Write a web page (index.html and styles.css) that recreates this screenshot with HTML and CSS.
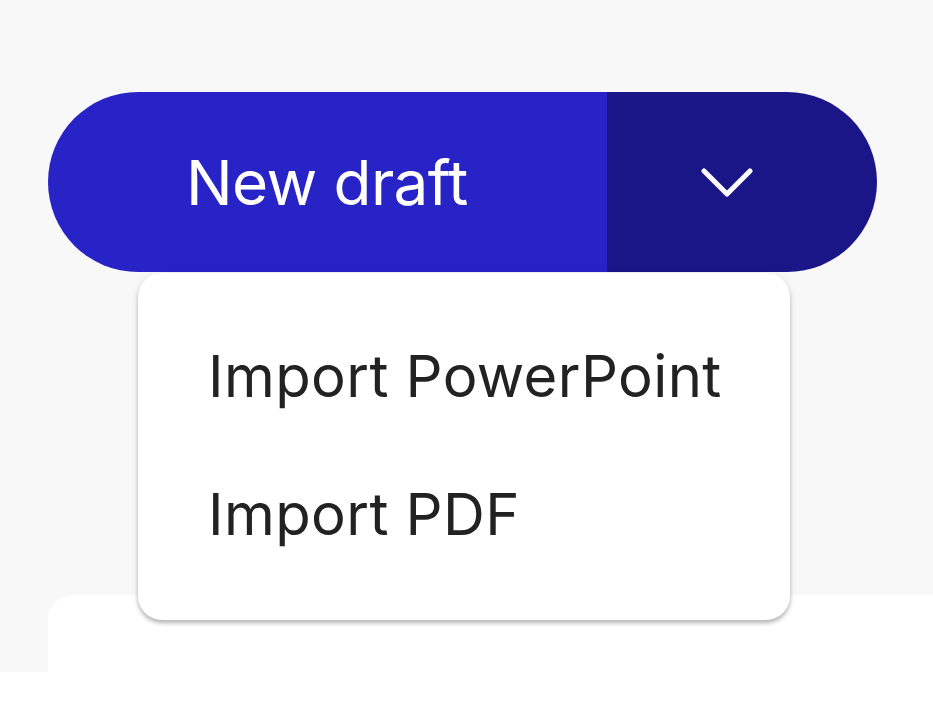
FILE: index.html
```html
<!DOCTYPE html>
<html lang="en">
<head>
    <meta charset="UTF-8">
    <title>New draft</title>
    <link rel="stylesheet" href="styles.css">
</head>
<body>
    <div class="top">
        <div class="split-button">
            <button class="split-main">New draft</button>
            <button class="split-toggle" aria-label="More options">
                <svg width="52" height="30" viewBox="0 0 52 30">
                    <polyline points="3,3 26,26 49,3" fill="none" stroke="#fff" stroke-width="5" stroke-linecap="round" stroke-linejoin="round"/>
                </svg>
            </button>
        </div>

        <div class="menu">
            <div class="menu-item">Import PowerPoint</div>
            <div class="menu-item">Import PDF</div>
        </div>
    </div>

    <div class="sheet-row">
        <div class="sheet"></div>
    </div>
    <div class="footer"></div>
</body>
</html>
```

FILE: styles.css
```css
body {
    margin: 0;
    background-color: #fff;
    font-family: Inter, "Liberation Sans", sans-serif;
}

.top {
    position: relative;
    height: 595px;
    padding: 92px 0 0 48px;
    box-sizing: border-box;
    background-color: #f8f8f8;
}

.split-button {
    display: flex;
    width: 829px;
    height: 180px;
}

.split-button button {
    border: none;
    margin: 0;
    font-family: inherit;
    cursor: pointer;
}

.split-main {
    width: 559px;
    padding: 0 0 0 138px;
    text-align: left;
    font-size: 62px;
    letter-spacing: -0.6px;
    color: #fff;
    background-color: #2823c7;
    border-radius: 90px 0 0 90px;
}

.split-toggle {
    flex: 1;
    display: flex;
    align-items: center;
    padding: 2px 0 0 94px;
    background-color: #1a1688;
    border-left: 5px solid #1e1a9e;
    border-radius: 0 90px 90px 0;
}

.split-toggle svg {
    display: block;
}

.menu {
    position: absolute;
    top: 273px;
    left: 138px;
    width: 652px;
    height: 347px;
    padding-top: 34px;
    box-sizing: border-box;
    background-color: #fff;
    border-radius: 24px;
    box-shadow: 0 3px 4px rgba(0, 0, 0, 0.28), 0 0 10px rgba(0, 0, 0, 0.05);
    z-index: 2;
}

.menu-item {
    height: 138px;
    padding-left: 70px;
    font-size: 58px;
    letter-spacing: 0.4px;
    line-height: 138px;
    color: #222;
}

.sheet-row {
    display: flex;
    height: 77px;
    padding-left: 48px;
    background-color: #f8f8f8;
}

.sheet {
    flex: 1;
    background-color: #fff;
    border-radius: 25px 0 0 0;
}

.footer {
    height: 60px;
}
```
